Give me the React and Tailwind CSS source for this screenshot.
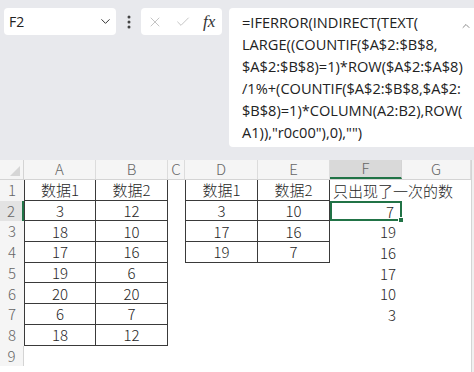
import { ChevronDown, ChevronUp, X, Check } from "lucide-react";

const cellFont = { fontFamily: '"Noto Sans CJK SC", "Noto Sans", sans-serif' };

const columns = [
  { key: "A", w: "w-[72px]" },
  { key: "B", w: "w-[72px]" },
  { key: "C", w: "w-[17px]" },
  { key: "D", w: "w-[73px]" },
  { key: "E", w: "w-[72px]" },
  { key: "F", w: "w-[72px]" },
  { key: "G", w: "w-[69px]" },
];

const rows = [
  { A: "数据1", B: "数据2", D: "数据1", E: "数据2", F: "只出现了一次的数" },
  { A: "3", B: "12", D: "3", E: "10", F: "7" },
  { A: "18", B: "10", D: "17", E: "16", F: "19" },
  { A: "17", B: "16", D: "19", E: "7", F: "16" },
  { A: "19", B: "6", F: "17" },
  { A: "20", B: "20", F: "10" },
  { A: "6", B: "7", F: "3" },
  { A: "18", B: "12" },
  {},
];

const formula = [
  "=IFERROR(INDIRECT(TEXT(",
  "LARGE((COUNTIF($A$2:$B$8,",
  "$A$2:$B$8)=1)*ROW($A$2:$A$8)",
  "/1%+(COUNTIF($A$2:$B$8,$A$2:",
  "$B$8)=1)*COLUMN(A2:B2),ROW(",
  'A1)),"r0c00"),0),"")',
];

function borderFor(col, r) {
  if (col === "A" && r <= 8) return "border-l border-r border-b border-[#3a3a3a]";
  if (col === "B" && r <= 8) return "border-r border-b border-[#3a3a3a]";
  if (col === "D" && r <= 4) return "border-l border-r border-b border-[#3a3a3a]";
  if (col === "E" && r <= 4) return "border-r border-b border-[#3a3a3a]";
  return "";
}

function Cell({ col, r, value }) {
  const isF = col === "F";
  const selected = isF && r === 2;
  const align = isF && r > 1 ? "justify-end pr-[6px]" : isF ? "justify-start pl-[3px]" : "justify-center";
  return (
    <div
      className={`relative flex items-center h-full shrink-0 ${columns.find((c) => c.key === col).w} ${borderFor(col, r)} ${align} ${
        selected ? "border-2 border-[#217346] pr-[4px]" : ""
      }`}
    >
      {value && (
        <span className="whitespace-nowrap text-[15px] leading-none text-[#262626] font-light">{value}</span>
      )}
      {selected && (
        <span className="absolute -right-[4px] -bottom-[4px] w-[6px] h-[6px] bg-[#217346] border border-white" />
      )}
    </div>
  );
}

function Sheet() {
  return (
    <div className="flex flex-col" style={cellFont}>
      <div className="flex h-[20px] bg-[#f5f5f5] border-b border-[#d4d4d4]">
        <div className="relative w-[24px] shrink-0 border-r border-[#d4d4d4]">
          <svg className="absolute right-[3px] bottom-[3px]" width="10" height="10" viewBox="0 0 10 10">
            <polygon points="10,0 10,10 0,10" fill="#d6d6d6" />
          </svg>
        </div>
        {columns.map((c) => (
          <div
            key={c.key}
            className={`flex items-center justify-center shrink-0 ${c.w} text-[15px] font-light text-[#666] ${
              c.key === "F" ? "bg-[#d9d9d9] border-b-2 border-[#217346] border-r border-r-[#d4d4d4]" : "border-r border-[#dcdcdc]"
            }`}
          >
            {c.key}
          </div>
        ))}
      </div>
      {rows.map((row, i) => {
        const r = i + 1;
        return (
          <div key={r} className="flex h-[20.7px]">
            <div
              className={`flex items-center justify-center w-[24px] shrink-0 text-[15px] font-light text-[#666] ${
                r === 2 ? "bg-[#e3e3e3] border-r-2 border-[#217346]" : r <= 8 ? "bg-[#f5f5f5]" : "bg-[#f5f5f5] border-r border-[#d4d4d4]"
              }`}
            >
              {r}
            </div>
            {columns.map((c) => (
              <Cell key={c.key} col={c.key} r={r} value={row[c.key]} />
            ))}
          </div>
        );
      })}
    </div>
  );
}

export default function App() {
  return (
    <div className="w-[474px] h-[372px] overflow-hidden bg-white relative">
      <div
        className="h-[160px] bg-[#e8e9ed] flex items-start pt-[8px] pl-[4px] gap-0"
        style={{ fontFamily: '"Open Sans", "Noto Sans", sans-serif' }}
      >
        <div className="w-[112px] h-[27px] bg-white rounded-[4px] flex items-center justify-between pl-[5px] pr-[3px] shrink-0">
          <span className="text-[14px] text-[#222]">F2</span>
          <ChevronDown size={15} strokeWidth={1.6} color="#333" />
        </div>
        <div className="w-[25px] h-[27px] flex items-center justify-center shrink-0">
          <svg width="4" height="14" viewBox="0 0 4 14">
            <circle cx="2" cy="2" r="1.5" fill="#444" />
            <circle cx="2" cy="7" r="1.5" fill="#444" />
            <circle cx="2" cy="12" r="1.5" fill="#444" />
          </svg>
        </div>
        <div className="w-[81px] h-[27px] bg-white rounded-[4px] flex items-center pl-[6px] gap-[12px] shrink-0">
          <X size={16} strokeWidth={1.2} color="#b5b5b5" />
          <Check size={16} strokeWidth={1.2} color="#b5b5b5" />
          <span
            className="text-[17px] italic text-[#333] leading-none"
            style={{ fontFamily: '"Liberation Serif", serif' }}
          >
            fx
          </span>
        </div>
        <div className="ml-[7px] h-[139px] flex-1 bg-white rounded-l-[4px] relative pt-[3px] pl-[13px]">
          {formula.map((line, i) => (
            <div key={i} className="h-[22px] leading-[22px] text-[14.6px] text-[#222] whitespace-nowrap">
              {line}
            </div>
          ))}
          <ChevronUp className="absolute right-[2px] top-[12px]" size={12} strokeWidth={1.5} color="#666" />
        </div>
      </div>
      <Sheet />
      <div className="absolute top-[160px] left-[471px] w-[3px] h-[212px] bg-[#f0f0f0] border-l border-[#d4d4d4]" />
    </div>
  );
}
